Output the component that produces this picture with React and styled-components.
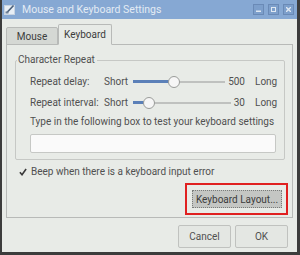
import React from "react"
import styled, { createGlobalStyle } from "styled-components"

const GlobalStyle = createGlobalStyle`
  html, body {
    margin: 0;
    padding: 0;
    background: #3c3c3c;
  }
  body {
    font-family: Roboto, "Liberation Sans", sans-serif;
  }
`

const App = () => {
  return (
    <>
      <GlobalStyle />
      <Window>
        <TitleBar>
          <AppIcon viewBox="0 0 11 11">
            <rect x="0.5" y="1.5" width="10" height="9" fill="#e8eef5" stroke="#c8d4e2" />
            <path d="M3 8.5 L9.5 1.5" stroke="#4a5f7a" strokeWidth="1.6" />
            <rect x="1.5" y="7.5" width="3" height="2" fill="#6c7f96" />
          </AppIcon>
          <Title>Mouse and Keyboard Settings</Title>
          <Controls>
            <CtrlButton>
              <svg width="5" height="5"><rect y="3.5" width="5" height="1.5" fill="#dfe8f2" /></svg>
            </CtrlButton>
            <CtrlButton>
              <svg width="5" height="5"><rect x="0.5" y="0.5" width="4" height="4" fill="none" stroke="#dfe8f2" /></svg>
            </CtrlButton>
            <CtrlButton>
              <svg width="5" height="5"><path d="M0 0 L5 5 M5 0 L0 5" stroke="#dfe8f2" strokeWidth="1.4" /></svg>
            </CtrlButton>
          </Controls>
        </TitleBar>
        <Body>
          <Tabs>
            <Tab>Mouse</Tab>
            <Tab $active>Keyboard</Tab>
          </Tabs>
          <Panel>
            <Frame>
              <Legend>Character Repeat</Legend>
              <Row>
                <Label>Repeat delay:</Label>
                <Short>Short</Short>
                <Slider>
                  <Fill style={{ width: "36px" }} />
                  <Knob style={{ left: "35px" }} />
                </Slider>
                <Value>500</Value>
                <Long>Long</Long>
              </Row>
              <Row>
                <Label>Repeat interval:</Label>
                <Short>Short</Short>
                <Slider>
                  <Fill style={{ width: "11px" }} />
                  <Knob style={{ left: "10px" }} />
                </Slider>
                <Value>30</Value>
                <Long>Long</Long>
              </Row>
              <Hint>Type in the following box to test your keyboard settings</Hint>
              <TestInput />
            </Frame>
            <CheckRow>
              <Check viewBox="0 0 9 9">
                <path d="M1 4.8 L3.4 7.6 L8 1.2" fill="none" stroke="#3a3a3a" strokeWidth="1.8" />
              </Check>
              <span>Beep when there is a keyboard input error</span>
            </CheckRow>
            <LayoutRow>
              <Highlight>
                <LayoutButton>Keyboard Layout...</LayoutButton>
              </Highlight>
            </LayoutRow>
          </Panel>
          <Actions>
            <Button>Cancel</Button>
            <Button>OK</Button>
          </Actions>
        </Body>
      </Window>
    </>
  )
}

export default App

const Window = styled.div`
  width: 300px;
  height: 255px;
  box-sizing: border-box;
  display: flex;
  flex-direction: column;
  background: #e8ebe7;
  border-left: 2px solid #3c3c3c;
  border-right: 3px solid #3c3c3c;
  border-bottom: 3px solid #3c3c3c;
  overflow: hidden;
`

const TitleBar = styled.div`
  height: 19px;
  flex: none;
  display: flex;
  align-items: center;
  background: #86a8d3;
  padding: 0 3px 0 2px;
  box-sizing: border-box;
`

const AppIcon = styled.svg`
  width: 11px;
  height: 11px;
  margin-right: 7px;
`

const Title = styled.div`
  color: #e3ebf4;
  font-size: 10.5px;
  flex: 1;
  white-space: nowrap;
`

const Controls = styled.div`
  display: flex;
  gap: 4px;
`

const CtrlButton = styled.div`
  width: 11px;
  height: 11px;
  box-sizing: border-box;
  border: 1px solid #6a8ab6;
  background: #7d9fcb;
  display: flex;
  align-items: center;
  justify-content: center;
`

const Body = styled.div`
  flex: 1;
  display: flex;
  flex-direction: column;
  padding: 5px 4px 0 4px;
  color: #505050;
  font-size: 10px;
`

const Tabs = styled.div`
  display: flex;
  align-items: flex-end;
  height: 20px;
  position: relative;
  z-index: 1;
`

const Tab = styled.div`
  box-sizing: border-box;
  width: ${(p) => (p.$active ? "54px" : "52px")};
  height: ${(p) => (p.$active ? "21px" : "18px")};
  display: flex;
  align-items: center;
  justify-content: center;
  font-size: 10px;
  color: #3c3c3c;
  border: 1px solid #b8bab8;
  border-bottom: ${(p) => (p.$active ? "1px solid #e8ebe7" : "1px solid #b8bab8")};
  background: ${(p) => (p.$active ? "#e8ebe7" : "#d5d8d4")};
  border-radius: 2px 2px 0 0;
  margin-bottom: -1px;
`

const Panel = styled.div`
  height: 174px;
  box-sizing: border-box;
  border: 1px solid #b8bab8;
  background: #e8ebe7;
  padding: 15px 7px 0 8px;
  display: flex;
  flex-direction: column;
`

const Frame = styled.div`
  position: relative;
  border: 1px solid #c6c8c5;
  border-radius: 2px;
  height: 100px;
  box-sizing: border-box;
  padding: 10px 7px 0 14px;
  display: flex;
  flex-direction: column;
`

const Legend = styled.div`
  position: absolute;
  top: -7px;
  left: 1px;
  background: #e8ebe7;
  padding: 0 2px 0 1px;
  line-height: 12px;
  font-size: 10px;
`

const Row = styled.div`
  display: flex;
  align-items: center;
  height: 21px;
`

const Label = styled.span`
  width: 74px;
  flex: none;
  white-space: nowrap;
`

const Short = styled.span`
  width: 29px;
  flex: none;
`

const Slider = styled.div`
  position: relative;
  flex: 1;
  height: 2px;
  background: #bfc1bf;
`

const Fill = styled.div`
  height: 3px;
  margin-top: -0.5px;
  background: #5b80b8;
`

const Knob = styled.div`
  position: absolute;
  top: -5px;
  width: 12px;
  height: 12px;
  box-sizing: border-box;
  border-radius: 50%;
  border: 1px solid #9a9c9a;
  background: #f6f6f6;
`

const Value = styled.span`
  margin: 0 10px 0 3px;
`

const Long = styled.span`
  width: 22px;
`

const Hint = styled.div`
  margin-top: 3px;
  line-height: 12px;
  white-space: nowrap;
`

const TestInput = styled.div`
  margin-top: 6px;
  margin-right: 1px;
  height: 19px;
  box-sizing: border-box;
  border: 1px solid #c6c8c5;
  border-radius: 2px;
  background: #fafafa;
`

const CheckRow = styled.div`
  display: flex;
  align-items: center;
  gap: 4px;
  margin-top: 6px;
  line-height: 12px;
  padding-left: 4px;
`

const Check = styled.svg`
  width: 8px;
  height: 8px;
`

const LayoutRow = styled.div`
  display: flex;
  justify-content: flex-end;
  margin-top: 5px;
`

const Highlight = styled.div`
  border: 2px solid #e02020;
  padding: 5px 4px 5px 5px;
  margin-right: -3px;
`

const LayoutButton = styled.div`
  width: 90px;
  height: 18px;
  box-sizing: border-box;
  display: flex;
  align-items: center;
  justify-content: center;
  background: #c4c6c3;
  border: 1px dotted #7a7c7a;
  font-size: 10px;
  color: #3c3c3c;
`

const Actions = styled.div`
  display: flex;
  justify-content: flex-end;
  gap: 4px;
  padding: 7px 5px 0 0;
`

const Button = styled.div`
  width: 53px;
  height: 23px;
  box-sizing: border-box;
  display: flex;
  align-items: center;
  justify-content: center;
  border: 1px solid #c0c2bf;
  border-radius: 2px;
  background: #e4e7e3;
  font-size: 10px;
  color: #505050;
`
